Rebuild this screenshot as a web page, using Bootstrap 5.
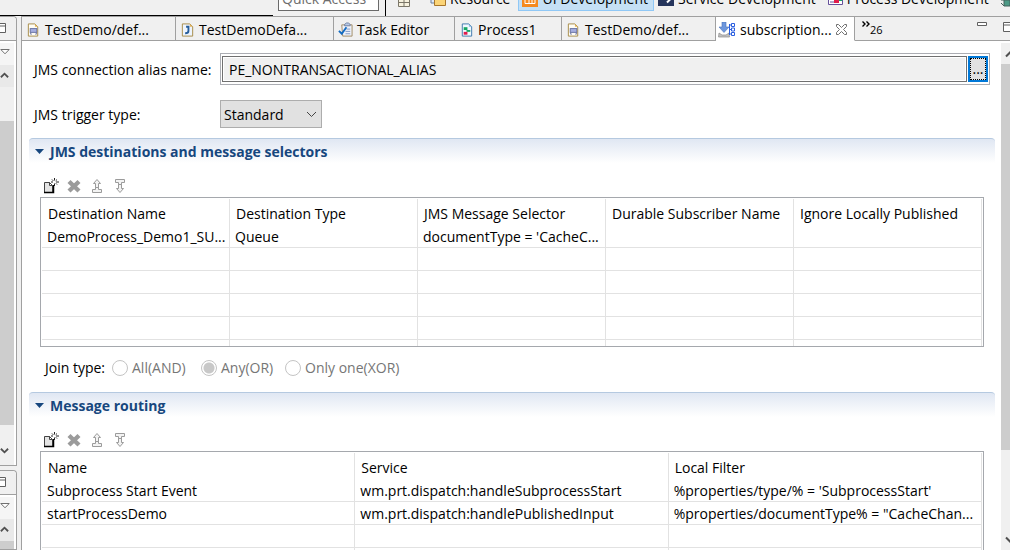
<!DOCTYPE html>
<html lang="en">
<head>
<meta charset="utf-8">
<meta name="viewport" content="width=device-width, initial-scale=1">
<title>Subscription editor</title>
<link href="https://cdn.jsdelivr.net/npm/bootstrap@5.3.0/dist/css/bootstrap.min.css" rel="stylesheet">
<style>
:root { --line: #a0a0a0; --face: #f0f0f0; --thumb: #cdcdcd; --grid: #e2e2e2; }
body { font-family: "Open Sans", "Noto Sans", sans-serif; font-size: 14px; line-height: 20px; color: #000; background: var(--face); }
svg { display: block; flex: none; }
.plain-btn { border: 0; padding: 0; background: none; color: inherit; }

/* perspective bar, scrolled partly out of view */
.perspective-bar { height: 16px; }
.bar-rule { width: 273px; height: 1px; background: #000; }
.quick-access { width: 101px; height: 26px; margin: 0 0 5px 5px; padding: 0 3px; border: 1px solid #6a6a6a; background: #fff; font-size: 14px; }
.quick-access::placeholder { color: #6d6d6d; opacity: 1; }
.bar-edge { width: 1px; height: 16px; margin-left: 6px; background: #000; }
.bar-sep { width: 1px; height: 26px; margin-bottom: 6px; background: var(--line); }
.persp { height: 26px; margin-bottom: 5px; padding: 1px 3px 0 3px; border: 1px solid transparent; gap: 4px; }
.persp-on { background: #c5e0f5; border-color: #90c8f6; padding-right: 5px; }

/* left stack */
.side { width: 17px; }
.pane { border: 1px solid var(--line); border-left: 0; border-radius: 0 4px 0 0; padding-right: 2px; background: #fff; }
.pane-main { flex: 0 0 450px; flex-basis: 84.300%; }
.pane-tab { height: 24px; margin-right: -2px; border-bottom: 1px solid var(--line); background: var(--face); border-radius: 0 4px 0 0; }
.pane-menu { height: 22px; margin-top: 2px; padding-bottom: 4px; background: #f5f5f5; }
.scroll-up { height: 22px; padding-bottom: 2px; background: #e9e9e9; }
.track { background: var(--face); }
.thumb { background: var(--thumb); }

/* editor */
.editor { margin-left: 4px; border-left: 1px solid var(--line); border-top: 1px solid var(--line); }
.tab-strip { height: 24px; }
.ed-tab { height: 24px; padding: 2px 0 0 4px; gap: 4px; border: 0; border-right: 1px solid var(--line); border-bottom: 1px solid var(--line); background: var(--face); color: #000; white-space: nowrap; text-align: left; }
.ed-tab.is-open { background: #fff; border-bottom-color: #fff; padding-left: 2px; }
.w-a { width: 154px; } .w-b { width: 158px; } .w-c { width: 121px; } .w-d { width: 107px; } .w-e { width: 139px; }
.strip-rest { border-bottom: 1px solid var(--line); padding: 0 0 0 7px; }
.more-count { font-size: 11px; line-height: 14px; padding-top: 6px; }
.form-body { padding: 12px 6px 0 7px; background: #fff; }
.form-label-cell { width: 191px; padding: 2px 0 0 5px; }
.alias-frame { height: 32px; margin-right: 5px; padding: 2px 1px 2px 1px; gap: 1px; border: 1px solid #abadb3; }
.alias-input { border: 1px solid #707070; padding: 2px 6px 0; box-shadow: inset 0 0 0 1px #fff; background: var(--face); min-width: 0; font-size: 14px; color: #000; }
.alias-more { width: 20px; border: 2px solid #0078d7; padding: 0; background: #e1e1e1; outline: 1px dotted #000; outline-offset: -3px; line-height: 20px; font-size: 14px; }
.trigger-select { width: 102px; height: 28px; appearance: none; border: 1px solid #adadad; border-radius: 0; padding: 2px 3px 0; color: #000; font-size: 14px;
  background: #e1e1e1 url("data:image/svg+xml,%3Csvg xmlns='http://www.w3.org/2000/svg' width='11' height='7'%3E%3Cpath d='M1 1l4.5 4.500L10 1' fill='none' stroke='%23444'/%3E%3C/svg%3E") no-repeat right 4px center; }
.form-row-trigger { margin: 15px 0 10px; }
.sect-head { height: 28px; padding: 0 0 2px 6px; gap: 6px; border-top: 1px solid #b5c9e0; border-radius: 4px 4px 0 0; background: linear-gradient(#e0e7f3, #fff 24px); }
.sect-head h2 { margin: 0; font-size: 14px; line-height: 24px; font-weight: 700; color: #17477e; }
.sect-tools { height: 31px; padding: 9px 0 0 14px; gap: 7px; }
.grid-frame { margin: 0 11px; border: 1px solid #a5a8ad; padding: 1px; overflow: hidden; height: 150px; }
.grid-table { width: 100%; table-layout: fixed; border-collapse: separate; border-spacing: 0; }
.grid-table th, .grid-table td { height: 23px; padding: 1px 0 0 5px; line-height: 21px; font-weight: 400; white-space: nowrap; overflow: hidden; border-right: 1px solid var(--grid); border-bottom: 1px solid var(--grid); }
.grid-table th { height: 26px; padding: 2px 0 0 6px; border-bottom: 0; }
.join-row { height: 45px; padding: 0 0 3px 16px; gap: 4px; }
.join-row span { width: 63px; }
.join-row label { color: #767676; width: 65px; }
.join-row label[for=j-or] { width: 60px; }
.join-row label[for=j-xor] { width: auto; }
.join-radio { appearance: none; width: 16px; height: 16px; margin: 0; border: 1px solid #c4c4c4; border-radius: 50%; background: #fff; }
.join-radio:checked { background: radial-gradient(circle, #c8c8c8 5px, #fff 6px); }
.scroll-col { width: 9px; margin-top: 2px; overflow: hidden; }
</style>
</head>
<body class="vh-100 overflow-hidden d-flex flex-column">

<svg width="0" height="0" class="position-absolute" aria-hidden="true">
  <symbol id="i-flow" viewBox="0 0 16 16"><path d="M2.500 1.500h7l3 3v10h-10z" fill="#fffdf5" stroke="#a58a45"/><path d="M9.500 1.500v3h3z" fill="#e4b45c"/><rect x="4.500" y="6.500" width="7" height="4" fill="#a6aee0" stroke="#6670a0"/><path d="M5 12.500h1m4 0h1M5 10.500v2m6-2v2" stroke="#6670a0"/></symbol>
  <symbol id="i-java" viewBox="0 0 16 16"><path d="M2.500 1.500h8l3 3v10h-11z" fill="#edf4fd" stroke="#a58a45"/><path d="M10.500 1.500v3h3z" fill="#e4b45c"/><path d="M6.500 4.500h3.500M9 4.500v4.500q0 2.500-3.500 2.500" fill="none" stroke="#245c9b" stroke-width="2"/></symbol>
  <symbol id="i-task" viewBox="0 0 16 16"><path d="M4 2.500h11v12H5z" fill="#edf1fa" stroke="#a08a62"/><path d="M7 3.500V2l2-1.500h2L13 2v1.500z" fill="#b7c9e8" stroke="#7080a0"/><path d="M9 7h4M8 9.500h5M8 12h5" stroke="#7e98c5"/><path d="M1 9l3 3 5-7" fill="none" stroke="#126bc2" stroke-width="2"/></symbol>
  <symbol id="i-proc" viewBox="0 0 16 16"><path d="M3.500 1.500h7l3 3v10h-10z" fill="#f1f8ff" stroke="#3d77ac"/><path d="M10.500 1.500v3h3z" fill="#8bb9df"/><rect x="5" y="5" width="4" height="3" fill="#16a765"/><rect x="8" y="8" width="4" height="2" fill="#16a765"/><rect x="5" y="10" width="4" height="3" fill="#e01c4c"/></symbol>
  <symbol id="i-sub" viewBox="0 0 18 16"><path d="M4 0h4v5h3l-5 5.500L1 5h3z" fill="#6d97dd" stroke="#4a72bb" stroke-width=".6"/><path d="M1 11l-.5 4h11l-.5-4-3 2H4z" fill="#c2c2c2" stroke="#8b8b8b" stroke-width=".7"/><path d="M11.500 13V2m0 1h2m-2 4.500h2m-2 4.500h2M13.500 1.500h3v3h-3zm0 4.500h3v3h-3zm0 4.500h3v3h-3z" fill="#fff" stroke="#2b5fe0"/></symbol>
  <symbol id="i-new" viewBox="0 0 16 16"><path d="M1.500 4.500h5l3 3v7h-8z" fill="#e4e4e4" stroke="#444"/><path d="M1 14.500h9.500V7" fill="none" stroke="#000" stroke-width="1.500"/><path d="M6.500 4.500v3h3z" fill="#fff" stroke="#444"/><path d="M11.500 0v2.500m0 3V8M8 4h2m3 0h3M9 1.500l1.300 1.300M14 6.500l-1.200-1.200M14 1.500l-1.300 1.300" stroke="#222"/></symbol>
  <symbol id="i-del" viewBox="0 0 16 16"><path d="M3 3.500l10 9.500m0-9.500L3 13" stroke="#9b9b9b" stroke-width="4.400"/></symbol>
  <symbol id="i-up" viewBox="0 0 16 16"><path d="M8 1.500l3.500 4h-2v4h-3v-4h-2zM3.500 11.500h3v-2h3v2h3v3h-9z" fill="#f3f3f3" stroke="#9b9b9b"/></symbol>
  <symbol id="i-down" viewBox="0 0 16 16"><path d="M3.500 1.500h9v3h-3v2h-3v-2h-3zM6.500 6.500h3v4h2l-3.500 4-3.500-4h2z" fill="#f3f3f3" stroke="#9b9b9b"/></symbol>
  <symbol id="i-tri" viewBox="0 0 10 6"><path d="M.8.5h8.400L5 4.800z" fill="#fff" stroke="#707070"/></symbol>
  <symbol id="i-chev" viewBox="0 0 10 8"><path d="M1 6.500l4-4 4 4" fill="none" stroke="#505050" stroke-width="2"/></symbol>
  <symbol id="i-max" viewBox="0 0 10 10"><path d="M.5.5h9v9h-9zM0 3h10" fill="#fff" stroke="#606060"/></symbol>
</svg>

<header class="perspective-bar d-flex align-items-end overflow-hidden flex-shrink-0 text-nowrap">
  <div class="bar-rule flex-shrink-0"></div>
  <input class="quick-access flex-shrink-0" type="text" placeholder="Quick Access" aria-label="Quick Access">
  <div class="bar-edge flex-shrink-0"></div>
  <button class="plain-btn ms-1 me-2 mb-2 ps-2" aria-label="Open perspective"><svg width="12" height="14" viewBox="0 0 12 14"><path d="M.5.5h11v12H.5zM0 8.500h12M6 3v10M0 4h12" fill="#f7f2df" stroke="#7b7668"/></svg></button>
  <div class="bar-sep ms-1"></div>
  <button class="plain-btn persp d-flex align-items-center ms-1"><svg width="16" height="16" viewBox="0 0 16 16"><path d="M1 2h9v10H1z" fill="#dfe9f8" stroke="#6a7f9e"/><path d="M4.500 5.500h11v9h-11z" fill="#fbd477" stroke="#a8762c"/></svg>Resource</button>
  <button class="plain-btn persp persp-on d-flex align-items-center ms-1"><svg width="16" height="16" viewBox="0 0 16 16"><path d="M0 0h16v16H0z" fill="#f58a1f"/><path d="M3 2.500h10v10H3zM3 7h10M7 7v5.500M10 7v5.500" fill="none" stroke="#fff"/></svg>UI Development</button>
  <button class="plain-btn persp d-flex align-items-center"><svg width="16" height="16" viewBox="0 0 16 16"><path d="M0 0h16v15H0z" fill="#26355c"/><path d="M3 8h9M9 4.500L12.500 8 9 11.500" fill="none" stroke="#fff" stroke-width="2"/></svg>Service Development</button>
  <button class="plain-btn persp d-flex align-items-center ms-1"><svg width="15" height="16" viewBox="0 0 15 16"><path d="M.5.5h14v13H.5z" fill="#fff" stroke="#65509a"/><path d="M2 8.500h4M2 11h4" stroke="#65509a"/><path d="M6 8h5v4H6z" fill="#e01c4c"/><path d="M11 7h3v3h-3z" fill="#16a765"/></svg>Process Development</button>
  <button class="plain-btn mb-2 ms-2" aria-label="Debug"><svg width="12" height="14" viewBox="0 0 12 14"><path d="M3 6h6v6H3zM0 6h3M0 9l3 3" fill="#4c9a86" stroke="#43635c"/></svg></button>
</header>

<div class="d-flex flex-grow-1" style="min-height:0">
  <aside class="side d-flex flex-column flex-shrink-0">
    <section class="pane pane-main d-flex flex-column">
      <div class="pane-tab d-flex align-items-center flex-shrink-0"><svg width="6" height="11" viewBox="4 0 6 11"><use href="#i-max" width="10" height="10"/></svg></div>
      <div class="pane-menu d-flex align-items-center flex-shrink-0"><svg width="10" height="6"><use href="#i-tri"/></svg></div>
      <div class="scroll-up d-flex align-items-center flex-shrink-0"><svg width="9" height="8"><use href="#i-chev"/></svg></div>
      <div class="track flex-grow-1 d-flex flex-column">
        <div style="flex:34"></div><div class="thumb" style="flex:303"></div><div style="flex:18"></div>
      </div>
      <div class="track d-flex align-items-start flex-shrink-0 pt-1" style="height:22px"><svg width="9" height="8" viewBox="0 0 10 8"><path d="M1 1.500l4 4 4-4" fill="none" stroke="#505050" stroke-width="2"/></svg></div>
    </section>
    <section class="pane d-flex flex-column flex-grow-1 overflow-hidden mt-1">
      <div class="pane-tab d-flex align-items-center flex-shrink-0"><svg width="6" height="11" viewBox="4 0 6 11"><use href="#i-max" width="10" height="10"/></svg></div>
      <div class="pane-menu d-flex align-items-center flex-shrink-0"><svg width="10" height="6"><use href="#i-tri"/></svg></div>
      <div class="scroll-up d-flex align-items-center flex-shrink-0"><svg width="9" height="8"><use href="#i-chev"/></svg></div>
      <div class="thumb flex-grow-1"></div>
    </section>
  </aside>

  <main class="editor d-flex flex-column flex-grow-1" style="min-width:0">
    <nav class="tab-strip d-flex flex-shrink-0" aria-label="Open editors">
      <button class="ed-tab w-a d-flex align-items-center"><svg width="15" height="16"><use href="#i-flow"/></svg>TestDemo/def...</button>
      <button class="ed-tab w-b d-flex align-items-center"><svg width="15" height="16"><use href="#i-java"/></svg>TestDemoDefa...</button>
      <button class="ed-tab w-c d-flex align-items-center"><svg width="15" height="16"><use href="#i-task"/></svg>Task Editor</button>
      <button class="ed-tab w-d d-flex align-items-center"><svg width="15" height="16"><use href="#i-proc"/></svg>Process1</button>
      <button class="ed-tab w-a d-flex align-items-center"><svg width="15" height="16"><use href="#i-flow"/></svg>TestDemo/def...</button>
      <button class="ed-tab is-open w-e d-flex align-items-center"><svg width="18" height="16"><use href="#i-sub"/></svg>subscription...<svg width="11" height="11" viewBox="0 0 11 11"><path d="M.5.5h2l3 3 3-3h2v2l-3 3 3 3v2h-2l-3-3-3 3h-2v-2l3-3-3-3z" fill="#fff" stroke="#707070"/></svg></button>
      <div class="strip-rest d-flex flex-grow-1">
        <button class="plain-btn d-flex align-items-start" aria-label="26 more editors"><svg class="mt-1" width="8" height="6" viewBox="0 0 8 6"><path d="M.5.5L3 3 .5 5.500M4.500.5L7 3 4.500 5.500" fill="none" stroke="#000" stroke-width="1.400"/></svg><span class="more-count">26</span></button>
        <div class="ms-auto d-flex gap-3 pt-1">
          <button class="plain-btn d-flex align-items-start" aria-label="Minimize"><svg width="10" height="5" viewBox="0 -1 10 5"><path d="M.5.5h9v3h-9z" fill="#fff" stroke="#606060"/></svg></button>
          <button class="plain-btn d-flex align-items-start" aria-label="Maximize"><svg width="7" height="11" viewBox="0 -1 7 11"><use href="#i-max" width="10" height="10"/></svg></button>
        </div>
      </div>
    </nav>

    <div class="d-flex flex-grow-1 bg-white" style="min-height:0">
      <form class="form-body flex-grow-1 overflow-hidden" onsubmit="return false">
        <div class="d-flex align-items-center">
          <label class="form-label-cell flex-shrink-0" for="alias">JMS connection alias name:</label>
          <div class="alias-frame d-flex flex-grow-1">
            <input class="alias-input flex-grow-1" id="alias" type="text" value="PE_NONTRANSACTIONAL_ALIAS" readonly>
            <button class="alias-more" type="button" aria-label="Browse">...</button>
          </div>
        </div>
        <div class="form-row-trigger d-flex align-items-center">
          <label class="form-label-cell flex-shrink-0" for="trigger">JMS trigger type:</label>
          <select class="trigger-select" id="trigger"><option>Standard</option></select>
        </div>

        <section>
          <div class="sect-head d-flex align-items-center"><svg width="9" height="5" viewBox="0 0 9 5"><path d="M0 0h9L4.500 5z" fill="#17477e"/></svg><h2>JMS destinations and message selectors</h2></div>
          <div class="sect-tools d-flex">
            <button class="plain-btn" type="button" aria-label="Insert row"><svg width="16" height="16"><use href="#i-new"/></svg></button>
            <button class="plain-btn" type="button" aria-label="Delete row" disabled><svg width="16" height="16"><use href="#i-del"/></svg></button>
            <button class="plain-btn" type="button" aria-label="Move up" disabled><svg width="16" height="16"><use href="#i-up"/></svg></button>
            <button class="plain-btn" type="button" aria-label="Move down" disabled><svg width="16" height="16"><use href="#i-down"/></svg></button>
          </div>
          <div class="grid-frame">
            <table class="grid-table">
              <thead><tr><th>Destination Name</th><th>Destination Type</th><th>JMS Message Selector</th><th>Durable Subscriber Name</th><th>Ignore Locally Published</th></tr></thead>
              <tbody>
                <tr><td>DemoProcess_Demo1_SU...</td><td>Queue</td><td>documentType = 'CacheC...</td><td></td><td></td></tr>
                <tr><td></td><td></td><td></td><td></td><td></td></tr>
                <tr><td></td><td></td><td></td><td></td><td></td></tr>
                <tr><td></td><td></td><td></td><td></td><td></td></tr>
                <tr><td></td><td></td><td></td><td></td><td></td></tr>
                <tr><td></td><td></td><td></td><td></td><td></td></tr>
              </tbody>
            </table>
          </div>
          <div class="join-row d-flex align-items-center" role="radiogroup" aria-labelledby="join-title">
            <span id="join-title">Join type:</span>
            <input class="join-radio" type="radio" name="join" id="j-and" disabled><label for="j-and">All(AND)</label>
            <input class="join-radio" type="radio" name="join" id="j-or" checked disabled><label for="j-or">Any(OR)</label>
            <input class="join-radio" type="radio" name="join" id="j-xor" disabled><label for="j-xor">Only one(XOR)</label>
          </div>
        </section>

        <section>
          <div class="sect-head d-flex align-items-center"><svg width="9" height="5" viewBox="0 0 9 5"><path d="M0 0h9L4.500 5z" fill="#17477e"/></svg><h2>Message routing</h2></div>
          <div class="sect-tools d-flex">
            <button class="plain-btn" type="button" aria-label="Insert row"><svg width="16" height="16"><use href="#i-new"/></svg></button>
            <button class="plain-btn" type="button" aria-label="Delete row" disabled><svg width="16" height="16"><use href="#i-del"/></svg></button>
            <button class="plain-btn" type="button" aria-label="Move up" disabled><svg width="16" height="16"><use href="#i-up"/></svg></button>
            <button class="plain-btn" type="button" aria-label="Move down" disabled><svg width="16" height="16"><use href="#i-down"/></svg></button>
          </div>
          <div class="grid-frame">
            <table class="grid-table">
              <thead><tr><th>Name</th><th>Service</th><th>Local Filter</th></tr></thead>
              <tbody>
                <tr><td>Subprocess Start Event</td><td>wm.prt.dispatch:handleSubprocessStart</td><td>%properties/type/% = 'SubprocessStart'</td></tr>
                <tr><td>startProcessDemo</td><td>wm.prt.dispatch:handlePublishedInput</td><td>%properties/documentType% = "CacheChan...</td></tr>
                <tr><td></td><td></td><td></td></tr>
                <tr><td></td><td></td><td></td></tr>
              </tbody>
            </table>
          </div>
        </section>
      </form>
      <div class="scroll-col track d-flex flex-column flex-shrink-0">
        <div class="d-flex align-items-center flex-shrink-0 ps-1" style="height:21px"><svg width="10" height="8"><use href="#i-chev"/></svg></div>
        <div class="thumb" style="flex:386"></div><div style="flex:79"></div>
        <div class="d-flex align-items-center flex-shrink-0 ps-1" style="height:21px"><svg width="10" height="8" viewBox="0 0 10 8"><path d="M1 1.500l4 4 4-4" fill="none" stroke="#505050" stroke-width="2"/></svg></div>
      </div>
    </div>
  </main>
</div>
<script src="https://cdn.jsdelivr.net/npm/bootstrap@5.3.0/dist/js/bootstrap.bundle.min.js"></script>
</body>
</html>
